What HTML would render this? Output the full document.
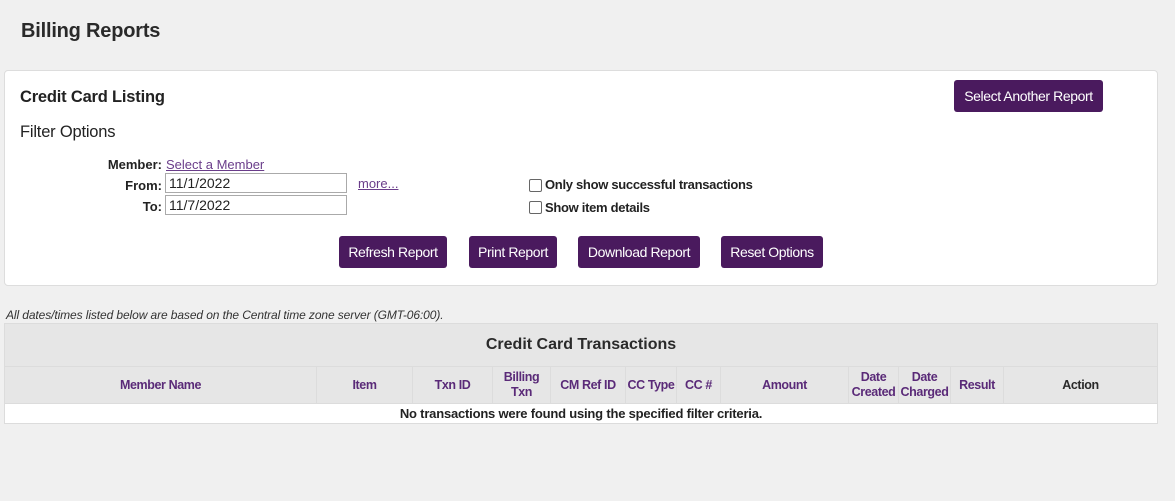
<!DOCTYPE html>
<html><head><style>
*{box-sizing:border-box;margin:0;padding:0}
body{width:1175px;height:501px;background:#f0f0f0;font-family:"Liberation Sans",Arial,sans-serif;color:#222;position:relative;overflow:hidden}
.a{position:absolute;white-space:nowrap}
.btn{position:absolute;background:#4a1a5e;color:#fff;border-radius:3px;font-size:14px;letter-spacing:-0.4px;display:flex;align-items:center;justify-content:center;height:32px}
.panel{position:absolute;left:4px;top:70px;width:1154px;height:216px;background:#fff;border:1px solid #ddd;border-radius:4px}
.inp{position:absolute;height:20px;width:182px;border:1px solid #aaa;background:#fff;font-size:14px;padding-left:3px;line-height:18px;color:#222}
.lbl{font-size:13px;font-weight:bold;text-align:right}
a{color:#6a3d8a;text-decoration:underline}
.cb{position:absolute;width:13px;height:13px;border:1px solid #666;border-radius:2px;background:#fff}
table{position:absolute;left:4px;top:323px;width:1154px;border-collapse:collapse;font-size:13px;table-layout:fixed}
th,td{border:1px solid #dcdcdc}
.hr th{background:#e6e6e6;color:#5a2a78;font-weight:bold;height:37px;line-height:15px;letter-spacing:-0.4px;font-size:12.5px;white-space:nowrap}
</style></head><body>
<div class="a" style="left:21px;top:20px;font-size:20px;font-weight:bold;color:#2a2a2a;letter-spacing:-0.2px">Billing Reports</div>
<div class="panel"></div>
<div class="a" style="left:20px;top:88px;font-size:16.5px;font-weight:bold;letter-spacing:-0.2px">Credit Card Listing</div>
<div class="a" style="left:20px;top:123px;font-size:16.5px;letter-spacing:-0.2px">Filter Options</div>
<div class="btn" style="left:954px;top:80px;width:149px">Select Another Report</div>
<div class="a lbl" style="left:60px;width:102px;top:157px">Member:</div>
<div class="a" style="left:166px;top:157px;font-size:13px"><a>Select a Member</a></div>
<div class="a lbl" style="left:60px;width:102px;top:178px">From:</div>
<div class="inp" style="left:165px;top:173px">11/1/2022</div>
<div class="a" style="left:358px;top:176px;font-size:13px"><a>more...</a></div>
<div class="a lbl" style="left:60px;width:102px;top:199px">To:</div>
<div class="inp" style="left:165px;top:195px">11/7/2022</div>
<div class="cb" style="left:529px;top:179px"></div>
<div class="a" style="left:545px;top:177px;font-size:13px;font-weight:bold;letter-spacing:-0.3px">Only show successful transactions</div>
<div class="cb" style="left:529px;top:201px"></div>
<div class="a" style="left:545px;top:200px;font-size:13px;font-weight:bold;letter-spacing:-0.3px">Show item details</div>
<div class="btn" style="left:339px;top:236px;width:108px">Refresh Report</div>
<div class="btn" style="left:469px;top:236px;width:88px">Print Report</div>
<div class="btn" style="left:578px;top:236px;width:122px">Download Report</div>
<div class="btn" style="left:721px;top:236px;width:102px">Reset Options</div>
<div class="a" style="left:6px;top:308px;font-size:12px;font-style:italic;color:#333;letter-spacing:-0.1px">All dates/times listed below are based on the Central time zone server (GMT-06:00).</div>
<table>
<colgroup><col style="width:312px"><col style="width:96px"><col style="width:80px"><col style="width:58px"><col style="width:75px"><col style="width:51px"><col style="width:44px"><col style="width:128px"><col style="width:50px"><col style="width:52px"><col style="width:53px"><col></colgroup>
<tr><th colspan="12" style="background:#e6e6e6;height:43px;font-size:16px;color:#2a2a2a">Credit Card Transactions</th></tr>
<tr class="hr">
<th>Member Name</th><th>Item</th><th>Txn ID</th><th>Billing<br>Txn</th><th>CM Ref ID</th><th>CC Type</th><th>CC #</th><th>Amount</th><th>Date<br>Created</th><th>Date<br>Charged</th><th>Result</th><th style="color:#2a2a2a">Action</th></tr>
<tr><td colspan="12" style="background:#fff;height:20px;text-align:center;font-weight:bold;letter-spacing:-0.2px">No transactions were found using the specified filter criteria.</td></tr>
</table>
</body></html>
